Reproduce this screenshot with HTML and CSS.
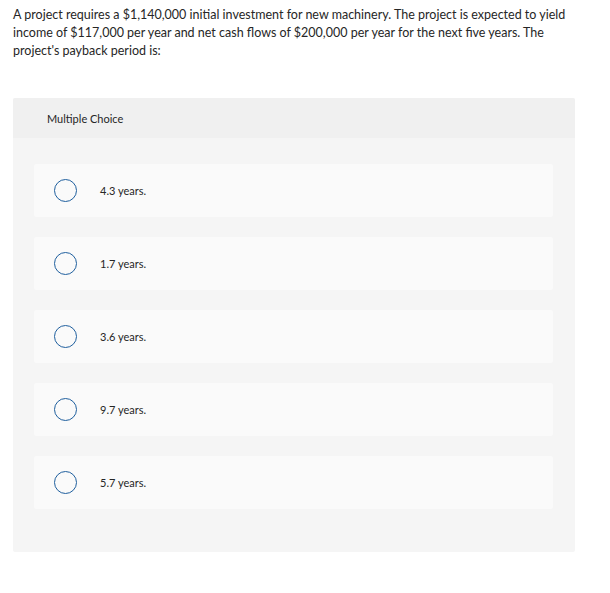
FILE: index.html
```html
<!DOCTYPE html>
<html>
<head>
<meta charset="utf-8">
<link rel="stylesheet" href="styles.css">
</head>
<body>
<p class="question">A project requires a $1,140,000 initial investment for new machinery. The project is expected to yield income of $117,000 per year and net cash flows of $200,000 per year for the next five years. The project's payback period is:</p>
<div class="panel">
  <div class="panel-head">Multiple Choice</div>
  <div class="options">
    <div class="option"><span class="radio"></span><span class="label">4.3 years.</span></div>
    <div class="option"><span class="radio"></span><span class="label">1.7 years.</span></div>
    <div class="option"><span class="radio"></span><span class="label">3.6 years.</span></div>
    <div class="option"><span class="radio"></span><span class="label">9.7 years.</span></div>
    <div class="option"><span class="radio"></span><span class="label">5.7 years.</span></div>
  </div>
</div>
</body>
</html>
```
FILE: styles.css
```css
body {
  margin: 0;
  padding: 6px 13px 0 13px;
  font-family: Lato, "Open Sans", sans-serif;
  color: #262626;
  background: #fff;
  width: 562px;
}
.question {
  margin: 0;
  font-size: 12.5px;
  line-height: 18px;
}
.panel {
  margin-top: 38px;
  background: #f5f5f5;
  border-radius: 2px;
  overflow: hidden;
}
.panel-head {
  background: #f0f0f0;
  height: 40px;
  display: flex;
  align-items: center;
  padding-left: 34px;
  font-size: 11px;
}
.options {
  display: flex;
  flex-direction: column;
  gap: 20px;
  padding: 26px 22px 43px 21px;
}
.option {
  background: #fafafa;
  height: 53px;
  border-radius: 2px;
  display: flex;
  align-items: center;
  padding-left: 20px;
}
.radio {
  width: 21px;
  height: 21px;
  border: 1px solid #1f5f9e;
  border-radius: 50%;
  flex: none;
}
.label {
  margin-left: 23px;
  font-size: 11px;
}
```
